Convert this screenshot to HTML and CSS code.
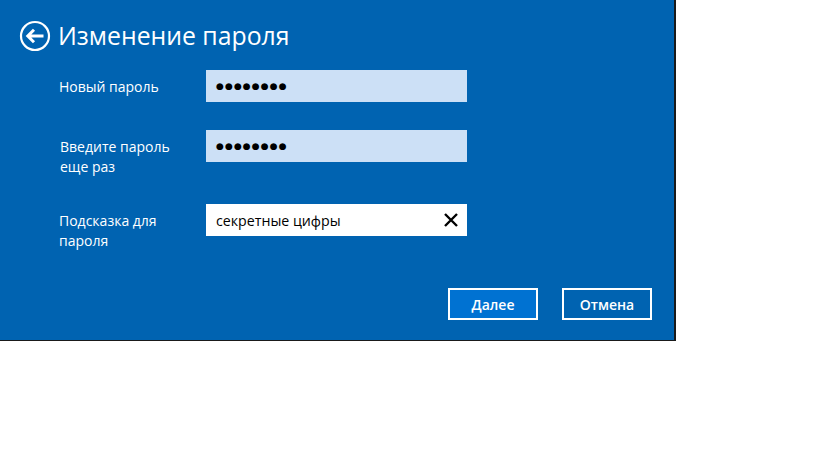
FILE: index.html
```html
<!DOCTYPE html>
<html lang="ru">
<head>
<meta charset="utf-8">
<title>Изменение пароля</title>
<link rel="stylesheet" href="styles.css">
</head>
<body>
<main class="panel">
  <header class="header">
    <svg class="back" width="32" height="32" viewBox="0 0 32 32" aria-hidden="true">
      <circle cx="16" cy="16" r="14" fill="none" stroke="#fff" stroke-width="2.2"/>
      <path d="M8.5 16 H24.5 M15 9.8 L8.8 16 L15 22.2" fill="none" stroke="#fff" stroke-width="3"/>
    </svg>
    <h1 class="title">Изменение пароля</h1>
  </header>
  <div class="form">
    <div class="row row-one">
      <div class="label label-first">Новый пароль</div>
      <div class="field field-pass"><span class="dots">●●●●●●●●</span></div>
    </div>
    <div class="row row-two">
      <div class="label label-second">Введите пароль<br>еще раз</div>
      <div class="field field-pass"><span class="dots">●●●●●●●●</span></div>
    </div>
    <div class="row row-three">
      <div class="label">Подсказка для<br>пароля</div>
      <div class="field field-text">
        <span class="value">секретные цифры</span>
        <svg class="clear" width="14" height="14" viewBox="0 0 14 14" aria-hidden="true">
          <path d="M1 1 L13 13 M13 1 L1 13" stroke="#000" stroke-width="2.4" fill="none"/>
        </svg>
      </div>
    </div>
  </div>
  <div class="actions">
    <button class="btn btn-primary">Далее</button>
    <button class="btn">Отмена</button>
  </div>
</main>
</body>
</html>
```
FILE: styles.css
```css
* { box-sizing: border-box; }
html, body { margin: 0; padding: 0; background: #fff; }
body { width: 819px; height: 460px; overflow: hidden; }
.panel {
  width: 676px;
  height: 341px;
  background: #0063b1;
  border-right: 2px solid #1a1a1a;
  border-bottom: 1px solid #1a1a1a;
  color: #fff;
  font-family: "Open Sans", "Noto Sans", sans-serif;
  display: flex;
  flex-direction: column;
  padding: 20px 0 0 19px;
}
.header { display: flex; align-items: center; gap: 7px; height: 32px; }
.back { display: block; flex: none; }
.title { margin: 0; font-size: 24.8px; font-weight: 400; line-height: 30px; height: 32px; }
.form { display: flex; flex-direction: column; margin-top: 18px; padding-left: 40px; }
.row { display: flex; align-items: flex-start; }
.row-two { margin-top: 28px; }
.row-three { margin-top: 27px; }
.label { width: 147px; font-size: 14px; line-height: 20px; padding-top: 7px; }
.label-second { padding-left: 1px; }
.field {
  width: 261px;
  height: 32px;
  display: flex;
  align-items: center;
  color: #000;
  padding-left: 10px;
}
.field-pass { background: #cce0f6; }
.field-text { background: #fff; justify-content: space-between; padding-right: 9px; font-size: 14.2px; }
.dots { font-family: "DejaVu Sans", sans-serif; font-size: 9px; letter-spacing: 1.1px; line-height: 32px; }
.clear { display: block; flex: none; }
.actions { display: flex; gap: 24px; justify-content: flex-end; margin-top: 37px; padding-right: 22px; }
.btn {
  width: 90px;
  height: 32px;
  background: transparent;
  border: 2px solid #fff;
  color: #fff;
  font-family: inherit;
  font-size: 14px;
  font-weight: 600;
  padding: 0;
}
.btn-primary { background: #0072d2; }
```
